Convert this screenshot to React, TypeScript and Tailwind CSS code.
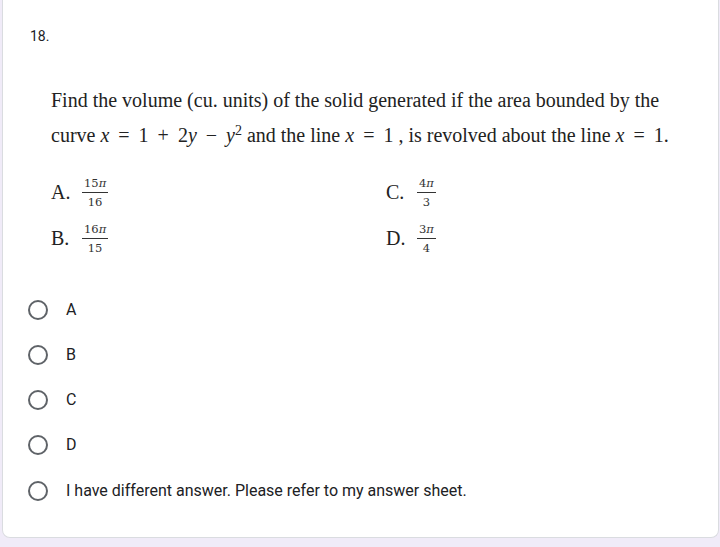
import React from 'react';

const serif = { fontFamily: '"Liberation Serif", "Times New Roman", serif' };

function Frac({ num, den }: { num: React.ReactNode; den: string }) {
  return (
    <span className="inline-flex flex-col items-center align-middle mx-[11px] text-[11.5px] leading-[12px] text-[#333]" style={{ fontFamily: '"DejaVu Serif", serif' }}>
      <span className="px-[2px] pb-[3px]">{num}</span>
      <span className="w-full h-px bg-[#333]" />
      <span className="px-[2px] pt-[3px]">{den}</span>
    </span>
  );
}

function Choice({ letter, num, den }: { letter: string; num: string; den: string }) {
  return (
    <div className="flex items-center h-[46px] text-[20px] text-[#222]" style={serif}>
      <span className="w-[20px]">{letter}</span>
      <Frac num={<>{num}<i>π</i></>} den={den} />
    </div>
  );
}

// math operator with spacing
function Op({ c }: { c: string }) {
  return <span className="mx-[9px]">{c}</span>;
}

const options = ['A', 'B', 'C', 'D', 'I have different answer. Please refer to my answer sheet.'];

export default function App() {
  return (
    <div className="min-h-[547px] w-[720px] bg-[#f0ebf8] pl-[2px] pr-px" style={{ fontFamily: 'Roboto, Arial, sans-serif' }}>
      <div className="bg-white border border-t-0 border-[#dadce0] rounded-b-lg h-[538px] pl-[27px] pt-[26px]">
        <div className="text-[14px] leading-5 text-[#202124]">18.</div>

        {/* question image */}
        <div className="pl-[21px] mt-[37px] text-[20px] leading-[35px] text-[#222]" style={serif}>
          <p className="whitespace-nowrap">Find the volume (cu. units) of the solid generated if the area bounded by the</p>
          <p className="whitespace-nowrap">
            curve <i>x</i><Op c="=" />1<Op c="+" />2<i>y</i><Op c="−" /><i>y</i><sup className="text-[14px]">2</sup> and the line <i>x</i><Op c="=" />1 , is revolved about the line <i>x</i><Op c="=" />1.
          </p>
          <div className="grid grid-cols-[335px_1fr] mt-[16px]">
            <Choice letter="A." num="15" den="16" />
            <Choice letter="C." num="4" den="3" />
            <Choice letter="B." num="16" den="15" />
            <Choice letter="D." num="3" den="4" />
          </div>
        </div>

        <div className="mt-[26px] -ml-[2px] flex flex-col">
          {options.map((o) => (
            <label key={o} className="flex items-center h-[45.25px] gap-[18px] text-[16px] text-[#202124]">
              <span className="w-5 h-5 rounded-full border-2 border-[#5f6368] shrink-0" />
              <span>{o}</span>
            </label>
          ))}
        </div>
      </div>
    </div>
  );
}
